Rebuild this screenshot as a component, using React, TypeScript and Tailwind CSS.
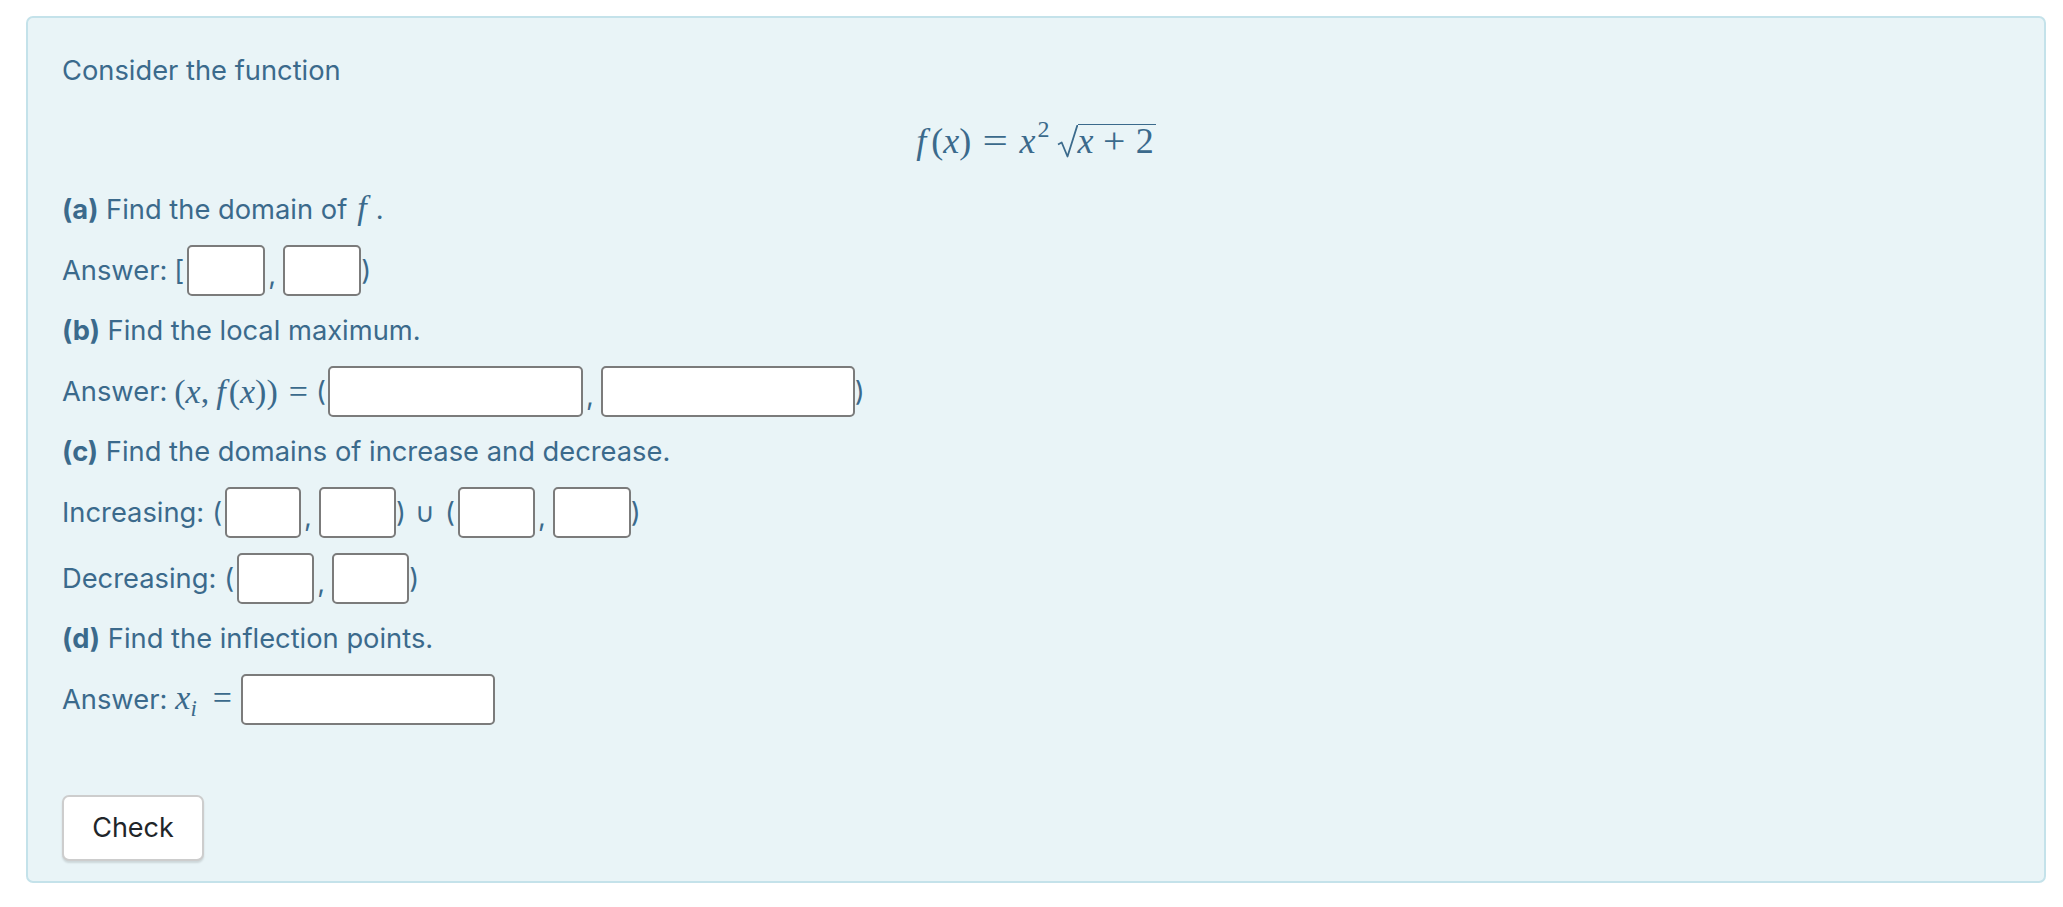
import React from "react";

const Inp = ({ w }: { w: string }) => (
  <span className={`inline-block h-[51px] shrink-0 rounded-[5px] border-2 border-[#7b7b7b] bg-white ${w}`} />
);

const Comma = () => <span className="ml-[3px] mr-[7px] self-end pb-[1px] leading-[40px]">,</span>;

const Row = ({ children }: { children: React.ReactNode }) => (
  <div className="flex h-[51px] items-center leading-[40px]">{children}</div>
);

export default function App() {
  return (
    <div className="min-h-screen bg-white pb-[26px] pl-[26px] pr-[17px] pt-[16px] font-['Inter',sans-serif] text-[27.3px] text-[#3b6a8c]">
      <div className="flex flex-col rounded-[7px] border-2 border-[#c4e2ea] bg-[#e9f4f7] pb-[20px] pl-[34px] pr-[34px] pt-[33px]">
        <p className="h-[40px] leading-[40px]">Consider the function</p>
        <div className="mt-[27px] h-[46px] text-center font-['Liberation_Serif',serif] text-[36px] leading-[46px]">
          <span className="mr-[5px] italic">f</span>
          <span>(</span>
          <span className="italic">x</span>
          <span>)</span>
          <span className="mx-[14px] inline-block scale-x-125">=</span>
          <span className="italic">x</span>
          <span className="relative -top-[16px] ml-[2px] text-[24px]">2</span>
          <svg width="21" height="33" viewBox="0 0 21 33" className="ml-[7px] inline-block align-[-5px]">
            <path d="M1 19.5 L4.7 17.5 L10.5 31.5 L20.2 0.8 L21 0.8" fill="none" stroke="#3b6a8c" strokeWidth="1.8" strokeLinejoin="round" />
          </svg>
          <span className="inline-block border-t-[1.6px] border-[#3b6a8c] pr-[2px] leading-[32px]">
            <span className="italic">x</span>
            <span className="mx-[11px] inline-block scale-x-110">+</span>
            <span>2</span>
          </span>
        </div>
        <div className="mt-[24px] flex flex-col gap-[15px]">
          <p className="leading-[40px]">
            <span className="font-bold">(a)</span> Find the domain of
            <span className="ml-[10px] font-['Liberation_Serif',serif] text-[34px] italic">f</span>
            <span className="ml-[9px]">.</span>
          </p>
          <Row>
            <span>Answer:</span>
            <span className="ml-[7px]">[</span>
            <span className="ml-[3px]" />
            <Inp w="w-[78px]" />
            <Comma />
            <Inp w="w-[78px]" />
            <span>)</span>
          </Row>
          <p className="leading-[40px]">
            <span className="font-bold">(b)</span> Find the local maximum.
          </p>
          <Row>
            <span>Answer:</span>
            <span className="ml-[7px] font-['Liberation_Serif',serif] text-[34px]">
              (<span className="italic">x</span>,<span className="ml-[7px] mr-[3px] italic">f</span>(<span className="italic">x</span>))
              <span className="ml-[11px]">=</span>
            </span>
            <span className="ml-[8px] mr-[2px]">(</span>
            <Inp w="w-[255px]" />
            <Comma />
            <Inp w="w-[254px]" />
            <span>)</span>
          </Row>
          <p className="leading-[40px]">
            <span className="font-bold">(c)</span> Find the domains of increase and decrease.
          </p>
          <Row>
            <span>Increasing:</span>
            <span className="ml-[8px] mr-[3px]">(</span>
            <Inp w="w-[76px]" />
            <Comma />
            <Inp w="w-[77px]" />
            <span>)</span>
            <span className="ml-[9px]">∪</span>
            <span className="ml-[10px] mr-[3px]">(</span>
            <Inp w="w-[77px]" />
            <Comma />
            <Inp w="w-[78px]" />
            <span>)</span>
          </Row>
          <Row>
            <span>Decreasing:</span>
            <span className="ml-[8px] mr-[3px]">(</span>
            <Inp w="w-[77px]" />
            <Comma />
            <Inp w="w-[77px]" />
            <span>)</span>
          </Row>
          <p className="leading-[40px]">
            <span className="font-bold">(d)</span> Find the inflection points.
          </p>
          <Row>
            <span>Answer:</span>
            <span className="ml-[8px] font-['Liberation_Serif',serif] text-[34px]">
              <span className="italic">x</span>
              <span className="relative top-[7px] text-[23px] italic">i</span>
              <span className="ml-[16px]">=</span>
            </span>
            <span className="ml-[9px]" />
            <Inp w="w-[254px]" />
          </Row>
        </div>
        <button className="mt-[70px] h-[66px] w-[142px] self-start rounded-[7px] border-2 border-[#cdcdcd] bg-white text-[27px] text-[#212529] shadow-[0_2px_2px_rgba(0,0,0,0.12)]">
          Check
        </button>
      </div>
    </div>
  );
}
